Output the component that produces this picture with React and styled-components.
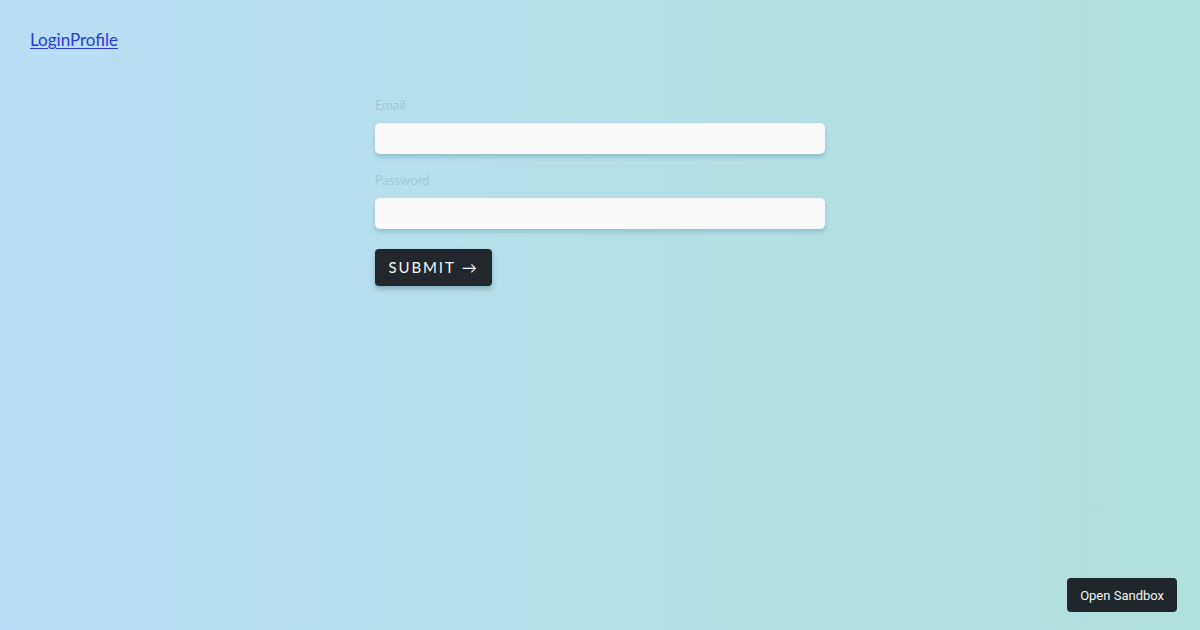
import React from "react";
import styled, { createGlobalStyle } from "styled-components";

const Global = createGlobalStyle`
  html, body { margin: 0; padding: 0; height: 100%; }
  body {
    font-family: "Lato", "Noto Sans", sans-serif;
    background: linear-gradient(90deg, #badef7 0%, #b2e0da 100%);
    min-height: 630px;
  }
`;

const Page = styled.div`
  position: relative;
  width: 1200px;
  height: 630px;
  box-sizing: border-box;
  padding: 29px 30px;
`;

const Nav = styled.nav`
  display: flex;
  height: 22px;
`;

const NavLink = styled.a`
  color: #2b39e0;
  font-family: "Lato", "Open Sans", sans-serif;
  font-size: 17px;
  text-decoration: underline;
  text-underline-offset: 2px;
  cursor: pointer;
`;

const Form = styled.form`
  display: flex;
  flex-direction: column;
  width: 450px;
  margin: 46px auto 0;
`;

const Label = styled.label`
  font-size: 13px;
  color: #a3c9d6;
  line-height: 16px;
  margin-bottom: 10px;
`;

const Input = styled.input`
  box-sizing: border-box;
  height: 31px;
  border: none;
  border-radius: 5px;
  background: #fafafa;
  box-shadow: 0 3px 4px rgba(60, 120, 140, 0.3);
  margin-bottom: 18px;
  padding: 0 10px;
  font-size: 14px;
  outline: none;
`;

const Submit = styled.button`
  align-self: flex-start;
  margin-top: 2px;
  height: 37px;
  width: 117px;
  padding: 0 0 2px;
  border: none;
  border-radius: 4px;
  background: #21272b;
  color: #f4f8fa;
  font-family: "Lato", "Open Sans", sans-serif;
  font-weight: 400;
  font-size: 15px;
  letter-spacing: 1.9px;
  box-shadow: 0 3px 5px rgba(40, 90, 110, 0.35);
  display: flex;
  align-items: center;
  justify-content: center;
  gap: 6px;
  cursor: pointer;
`;

const Sandbox = styled.button`
  position: absolute;
  right: 23px;
  bottom: 18px;
  height: 34px;
  padding: 0 13px;
  border: none;
  border-radius: 4px;
  background: #1f272b;
  color: #f2f5f7;
  font-family: "Roboto", "Liberation Sans", sans-serif;
  font-size: 13px;
  cursor: pointer;
`;

export default function App() {
  return (
    <>
      <Global />
      <Page>
        <Nav>
          <NavLink>LoginProfile</NavLink>
        </Nav>
        <Form onSubmit={(e) => e.preventDefault()}>
          <Label>Email</Label>
          <Input type="email" />
          <Label>Password</Label>
          <Input type="password" />
          <Submit type="submit">SUBMIT <span>→</span></Submit>
        </Form>
        <Sandbox>Open Sandbox</Sandbox>
      </Page>
    </>
  );
}
